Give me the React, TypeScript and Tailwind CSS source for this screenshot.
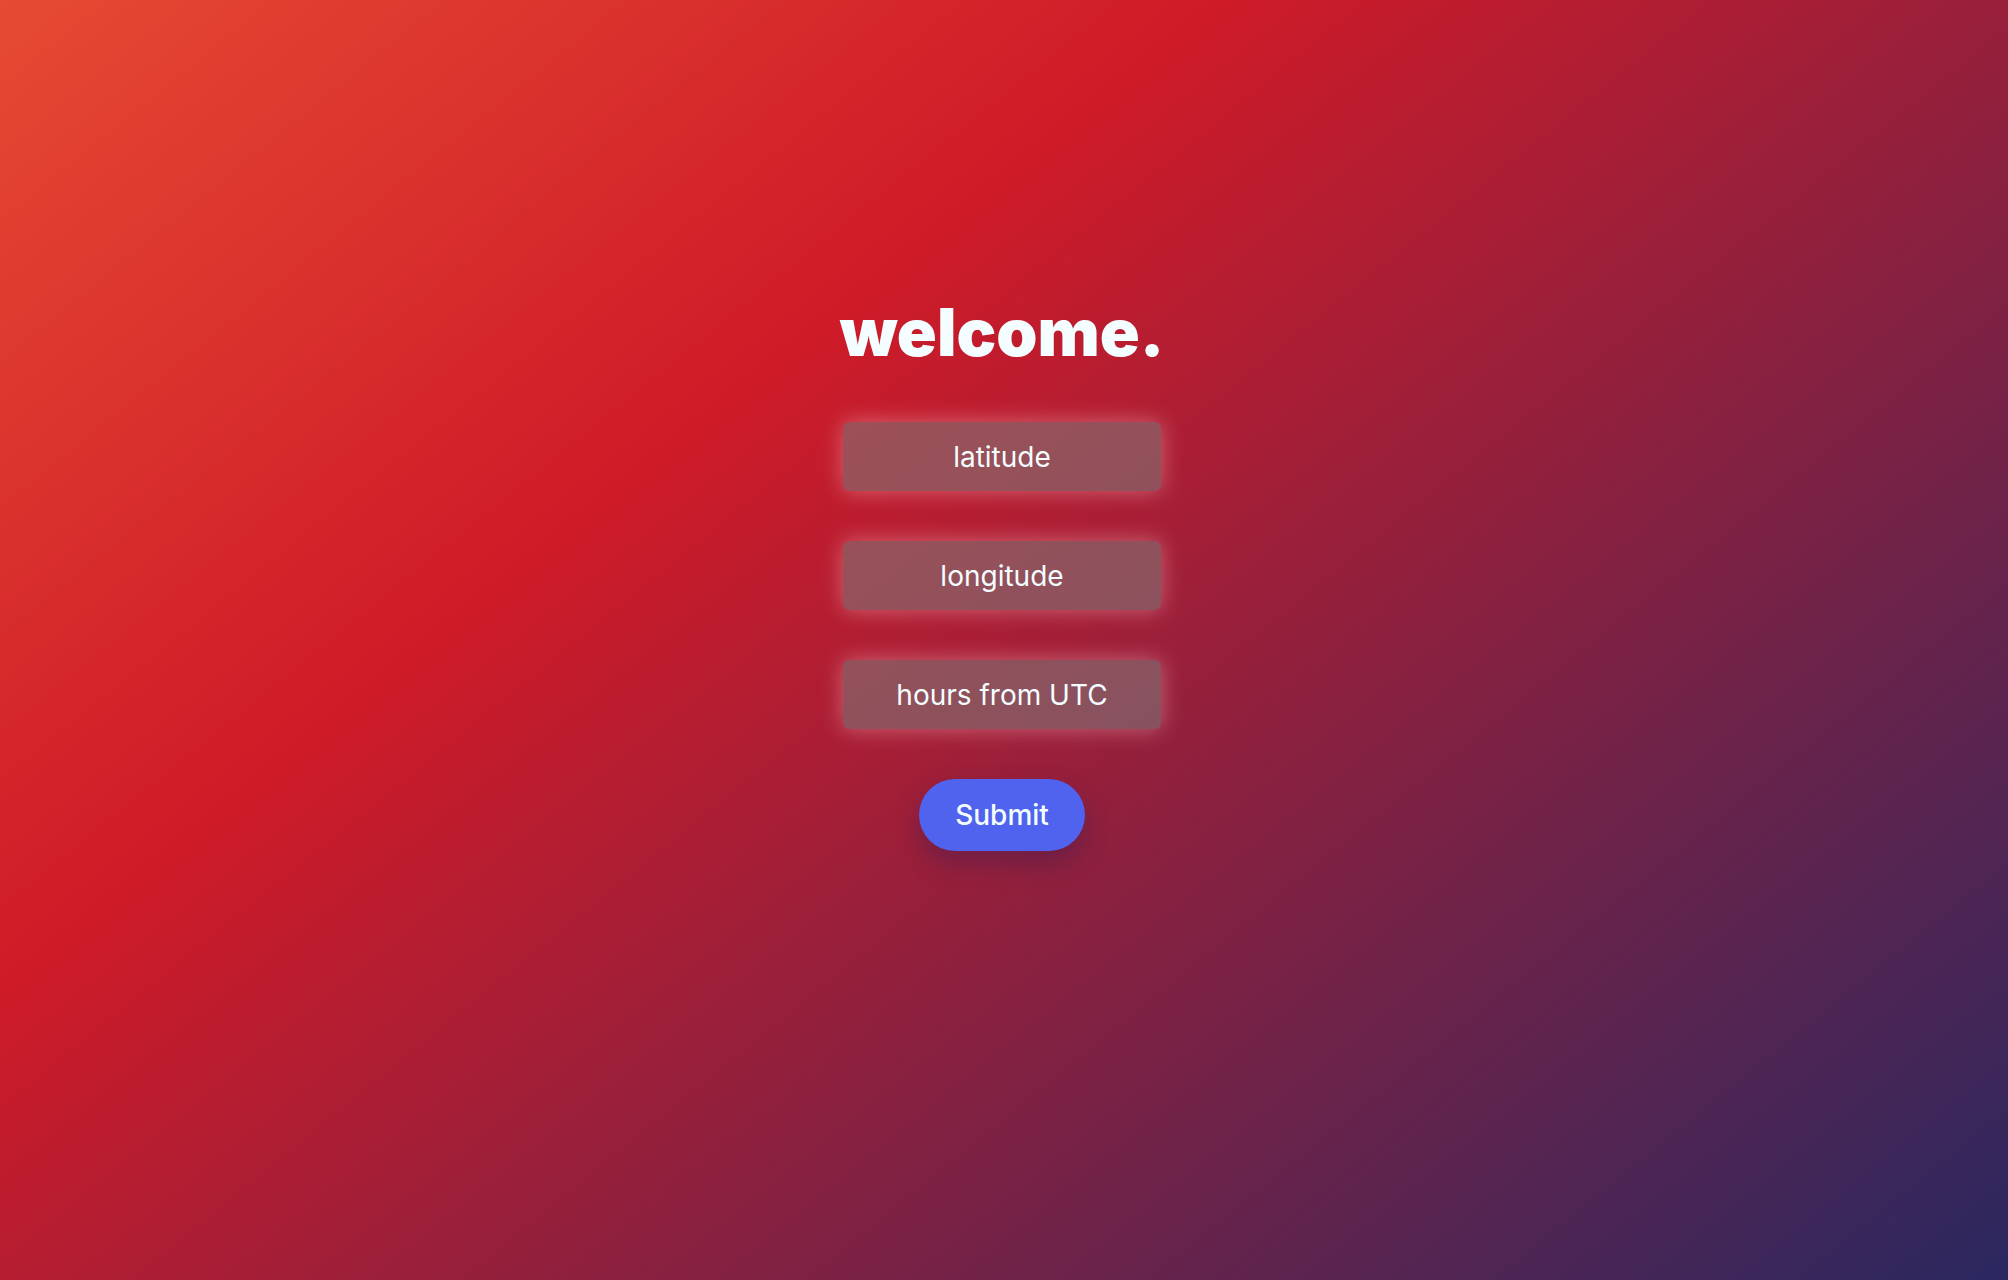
import { useState } from "react";

export default function App() {
  const [lat, setLat] = useState("");
  const [lng, setLng] = useState("");
  const [offset, setOffset] = useState("");

  const fieldClass =
    "w-[318px] h-[69px] rounded-[6px] bg-[rgba(124,124,124,0.55)] text-center text-[28px] text-[#f4fdff] placeholder:text-[#f4fdff] outline-none shadow-[0_0_22px_rgba(255,190,200,0.45)]";

  return (
    <div
      className="min-h-screen w-full flex flex-col items-center pt-[299px] pr-[4px] bg-[linear-gradient(141deg,#e64a33_0%,#cf1b28_34%,#2a2860_100%)]"
      style={{ fontFamily: "Inter, 'Noto Sans', sans-serif" }}
    >
      <h1 className="h-[66px] text-[66px] leading-none font-black tracking-[0em] text-[#f4fdff]">
        welcome.
      </h1>

      <form
        className="mt-[57px] flex flex-col items-center"
        onSubmit={(e) => e.preventDefault()}
      >
        <div className="flex flex-col gap-[50px]">
          <input value={lat} onChange={(e) => setLat(e.target.value)} placeholder="latitude" className={fieldClass} />
          <input value={lng} onChange={(e) => setLng(e.target.value)} placeholder="longitude" className={fieldClass} />
          <input value={offset} onChange={(e) => setOffset(e.target.value)} placeholder="hours from UTC" className={fieldClass} />
        </div>

        <button
          type="submit"
          className="mt-[50px] w-[166px] h-[72px] rounded-full bg-[#5063ee] text-[28px] font-medium text-[#f4fdff] shadow-[0_12px_24px_rgba(40,30,90,0.35)]"
        >
          Submit
        </button>
      </form>
    </div>
  );
}
